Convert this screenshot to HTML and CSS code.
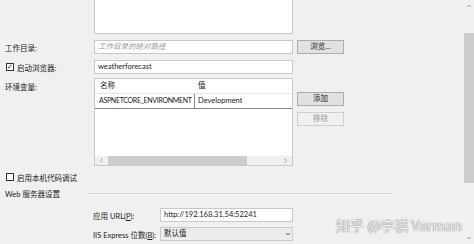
FILE: index.html
```html
<!DOCTYPE html>
<html>

<head>
    <meta charset="UTF-8">
    <meta name="viewport" content="width=device-width, initial-scale=1.0">
    <title>调试属性</title>
    <link rel="stylesheet" href="styles.css">
</head>

<body>
    <div class="window">
        <div class="content">
            <div class="row top-row">
                <div class="label"></div>
                <div class="textarea"></div>
            </div>
            <div class="row field-row">
                <div class="label">工作目录:</div>
                <div class="textbox placeholder">工作目录的绝对路径</div>
                <div class="button">浏览...</div>
            </div>
            <div class="row field-row second">
                <div class="label check-label"><span class="checkbox checked">&#10003;</span>启动浏览器:</div>
                <div class="textbox">weatherforecast</div>
            </div>
            <div class="row env-row">
                <div class="label env-label">环境变量:</div>
                <div class="grid">
                    <div class="grid-head">
                        <div class="cell name">名称</div>
                        <div class="cell value">值</div>
                    </div>
                    <div class="grid-row">
                        <div class="cell name caps">ASPNETCORE_ENVIRONMENT</div>
                        <div class="cell value">Development</div>
                    </div>
                    <div class="grid-empty"></div>
                    <div class="hscroll">
                        <svg class="arrow" width="13" height="9" viewBox="0 0 13 9"><path d="M7.5 2.5 L5.5 4.5 L7.5 6.5" fill="none" stroke="#a0a0a0" stroke-width="1"/></svg>
                        <div class="hthumb"></div>
                        <div class="htrack"></div>
                        <svg class="arrow" width="13" height="9" viewBox="0 0 13 9"><path d="M5.5 2.5 L7.5 4.5 L5.5 6.5" fill="none" stroke="#a0a0a0" stroke-width="1"/></svg>
                    </div>
                </div>
                <div class="side-buttons">
                    <div class="button">添加</div>
                    <div class="button disabled">移除</div>
                </div>
            </div>
            <div class="check-row">
                <span class="checkbox"></span>启用本机代码调试
            </div>
            <div class="section">
                <span class="section-title">Web 服务器设置</span>
                <div class="section-line"></div>
            </div>
            <div class="row sub-row">
                <div class="sub-label">应用 URL(<u>P</u>):</div>
                <div class="textbox sub-field">http://192.168.31.54:52241</div>
            </div>
            <div class="row sub-row second">
                <div class="sub-label">IIS Express 位数(<u>B</u>):</div>
                <div class="textbox sub-field select">
                    <span>默认值</span>
                    <svg class="caret" width="8" height="12" viewBox="0 0 8 12"><path d="M2 5 L4 7 L6 5" fill="none" stroke="#606060" stroke-width="1"/></svg>
                </div>
            </div>
        </div>
        <div class="vscroll">
            <svg width="10" height="12" viewBox="0 0 10 12"><path d="M3 7 L5 5 L7 7" fill="none" stroke="#a0a0a0" stroke-width="1"/></svg>
            <div class="vthumb"></div>
            <div class="vrest"></div>
            <svg width="10" height="12" viewBox="0 0 10 12"><path d="M3 5 L5 7 L7 5" fill="none" stroke="#a0a0a0" stroke-width="1"/></svg>
        </div>
        <div class="watermark">知乎 @李祺 Varman</div>
    </div>
</body>

</html>
```

FILE: styles.css
```css
body {
    margin: 0;
    background-color: #f0f0f0;
    font-family: Lato, "Noto Sans CJK SC", sans-serif;
    font-size: 7.5px;
    color: #1a1a1a;
}

.window {
    position: relative;
    display: flex;
    width: 474px;
    height: 244px;
    overflow: hidden;
}

.content {
    flex: 1;
    padding-left: 5px;
}

.row {
    display: flex;
    align-items: center;
}

.label {
    width: 89px;
    flex-shrink: 0;
}

.textarea {
    width: 197px;
    height: 33px;
    background-color: white;
    border: 1px solid #c8c8c8;
    border-top: none;
}

.textbox {
    box-sizing: border-box;
    width: 199px;
    height: 14px;
    line-height: 12px;
    padding-left: 3px;
    background-color: white;
    border: 1px solid #c8c8c8;
    white-space: nowrap;
    overflow: hidden;
}

.placeholder {
    color: #9a9a9a;
    font-style: italic;
}

.field-row {
    margin-top: 6px;
}

.button {
    box-sizing: border-box;
    width: 47px;
    height: 14px;
    line-height: 12px;
    margin-left: 4px;
    text-align: center;
    background-color: #e1e1e1;
    border: 1px solid #adadad;
}

.button.disabled {
    background-color: #f0f0f0;
    border-color: #cfcfcf;
    color: #9d9d9d;
}

.check-label {
    display: flex;
    align-items: center;
}

.checkbox {
    box-sizing: border-box;
    display: inline-block;
    width: 8px;
    height: 8px;
    margin-left: 1px;
    margin-right: 3px;
    border: 1px solid #333;
    background-color: white;
    font-family: "DejaVu Sans", sans-serif;
    font-size: 7px;
    line-height: 6px;
    text-align: center;
}

.env-row {
    align-items: flex-start;
    margin-top: 4px;
}

.env-label {
    margin-top: 3px;
}

.grid {
    box-sizing: border-box;
    width: 199px;
    height: 88px;
    display: flex;
    flex-direction: column;
    background-color: white;
    border: 1px solid #c8c8c8;
}

.grid-head,
.grid-row {
    display: flex;
    height: 14px;
    line-height: 13px;
}

.grid-head {
    border-bottom: 1px solid #e5e5e5;
}

.grid-row {
    border-bottom: 1px solid #888;
}

.cell {
    white-space: nowrap;
    overflow: hidden;
}

.cell.name {
    width: 95px;
    padding-left: 5px;
}

.cell.caps {
    box-sizing: border-box;
    width: 100px;
    padding-left: 4px;
    border-right: 1px solid #888;
    font-size: 7px;
    letter-spacing: -0.3px;
}

.cell.value {
    padding-left: 3px;
}

.grid-empty {
    flex: 1;
}

.hscroll {
    display: flex;
    align-items: center;
    height: 9px;
    background-color: #f0f0f0;
}

.hthumb {
    width: 139px;
    height: 9px;
    background-color: #cdcdcd;
}

.htrack {
    flex: 1;
}

.side-buttons {
    display: flex;
    flex-direction: column;
    gap: 6px;
    margin-top: 14px;
}

.check-row {
    display: flex;
    align-items: center;
    height: 10px;
    margin-top: 6px;
}

.section {
    display: flex;
    align-items: center;
    margin-top: 6px;
}

.section-title {
    width: 82px;
}

.section-line {
    width: 305px;
    border-top: 1px solid #d6d6d6;
    border-bottom: 1px solid #fbfbfb;
}

.sub-row {
    margin-top: 9px;
}

.sub-row.second {
    margin-top: 5px;
}

.sub-label {
    width: 67px;
    margin-left: 88px;
    white-space: nowrap;
}

.sub-field {
    width: 133px;
}

.select {
    display: flex;
    justify-content: space-between;
    align-items: center;
    background-color: #ececec;
    border-color: #cacaca;
}

.vscroll {
    display: flex;
    flex-direction: column;
    width: 10px;
    background-color: #f0f0f0;
}

.vthumb {
    margin-top: 21px;
    width: 10px;
    height: 150px;
    background-color: #cdcdcd;
}

.vrest {
    flex: 1;
}

.watermark {
    position: absolute;
    left: 336px;
    top: 215px;
    font-family: "Noto Sans CJK SC", sans-serif;
    font-size: 14px;
    color: rgba(255, 255, 255, 0.9);
    text-shadow: 0 0 1px #7a7a7a, 0 0 1px #7a7a7a;
    white-space: nowrap;
}
```
